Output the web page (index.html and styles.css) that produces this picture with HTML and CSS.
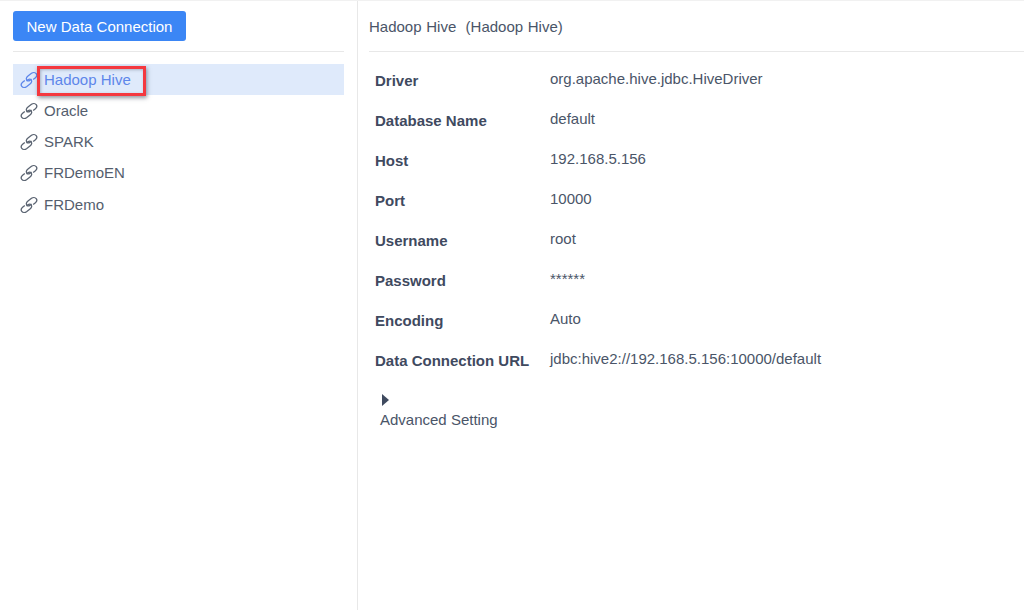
FILE: index.html
```html
<!DOCTYPE html>
<html lang="en">
<head>
    <meta charset="UTF-8">
    <meta name="viewport" content="width=device-width, initial-scale=1.0">
    <title>Data Connection</title>
    <link rel="stylesheet" href="styles.css">
</head>
<body>

    <svg class="sprite" width="0" height="0">
        <symbol id="link" viewBox="0 0 18 18">
            <path d="M13.2 8.6 L15.4 6.8 C16.8 5.6 17.2 3.9 16.2 2.6 C15.2 1.3 13 1.2 11.5 2.3 L8 5 C6 6.6 6 8.2 7 9.2 C7.8 10 9 10 10 9.2 L11.5 8"/>
            <path d="M4.8 9.4 L2.6 11.2 C1.2 12.4 0.8 14.1 1.8 15.4 C2.8 16.7 5 16.8 6.5 15.7 L10 13 C12 11.4 12 9.8 11 8.8 C10.2 8 9 8 8 8.8 L6.5 10"/>
        </symbol>
    </svg>

    <div class="page">
        <!-- Connection list -->
        <aside class="sidebar">
            <div class="toolbar">
                <button class="button">New Data Connection</button>
            </div>
            <ul class="conn-list">
                <li class="conn-item active">
                    <svg class="conn-icon"><use href="#link"/></svg>
                    <span>Hadoop Hive</span>
                    <div class="highlight"></div>
                </li>
                <li class="conn-item">
                    <svg class="conn-icon"><use href="#link"/></svg>
                    <span>Oracle</span>
                </li>
                <li class="conn-item">
                    <svg class="conn-icon"><use href="#link"/></svg>
                    <span>SPARK</span>
                </li>
                <li class="conn-item">
                    <svg class="conn-icon"><use href="#link"/></svg>
                    <span>FRDemoEN</span>
                </li>
                <li class="conn-item">
                    <svg class="conn-icon"><use href="#link"/></svg>
                    <span>FRDemo</span>
                </li>
            </ul>
        </aside>

        <!-- Connection details -->
        <main class="detail">
            <h1 class="detail-title">Hadoop Hive&nbsp; (Hadoop Hive)</h1>
            <div class="fields">
                <div class="field"><label>Driver</label><div class="value">org.apache.hive.jdbc.HiveDriver</div></div>
                <div class="field"><label>Database Name</label><div class="value">default</div></div>
                <div class="field"><label>Host</label><div class="value">192.168.5.156</div></div>
                <div class="field"><label>Port</label><div class="value">10000</div></div>
                <div class="field"><label>Username</label><div class="value">root</div></div>
                <div class="field"><label>Password</label><div class="value">******</div></div>
                <div class="field"><label>Encoding</label><div class="value">Auto</div></div>
                <div class="field"><label>Data Connection URL</label><div class="value">jdbc:hive2://192.168.5.156:10000/default</div></div>
            </div>
            <div class="advanced">
                <div class="arrow"></div>
                <div class="advanced-label">Advanced Setting</div>
            </div>
        </main>
    </div>

</body>
</html>
```

FILE: styles.css
```css
* {
    box-sizing: border-box;
}
body {
    margin: 0;
    font-family: "Liberation Sans", Arial, sans-serif;
    font-size: 15px;
    color: #4a5568;
    background-color: #fff;
}
.sprite {
    display: block;
    height: 0;
}
.page {
    display: flex;
    height: 610px;
    border-top: 1px solid #f1f1f1;
}
.sidebar {
    width: 358px;
    flex: none;
    padding: 0 13px;
    border-right: 1px solid #e8e8e8;
}
.toolbar {
    height: 51px;
    padding-top: 10px;
    border-bottom: 1px solid #e8e8e8;
}
.button {
    display: block;
    width: 173px;
    height: 30px;
    padding: 0;
    background-color: #3b86f5;
    color: #fff;
    border: none;
    border-radius: 3px;
    font-family: inherit;
    font-size: 15px;
}
.conn-list {
    list-style: none;
    margin: 12px 0 0;
    padding: 0;
}
.conn-item {
    position: relative;
    display: flex;
    align-items: center;
    height: 31px;
    padding-left: 7px;
    color: #545e6e;
}
.conn-item:last-child {
    margin-top: 1px;
}
.conn-item.active {
    background-color: #dfeafb;
    color: #5d86ea;
}
.conn-icon {
    width: 18px;
    height: 18px;
    margin-right: 6px;
    fill: none;
    stroke: #5b6472;
    stroke-width: 1.3;
}
.active .conn-icon {
    stroke: #5d86ea;
}
.highlight {
    position: absolute;
    left: 24px;
    top: 2px;
    width: 109px;
    height: 30px;
    border: 3px solid #f4383f;
    box-shadow: 1px 2px 4px rgba(40, 50, 70, 0.5), inset 1px 1px 3px rgba(40, 50, 70, 0.3);
}
.detail {
    flex: 1;
    padding-left: 11px;
}
.detail-title {
    height: 51px;
    margin: 0;
    padding-top: 17px;
    font-size: 15px;
    font-weight: normal;
    line-height: 18px;
    word-spacing: 0.5px;
    border-bottom: 1px solid #e8e8e8;
}
.fields {
    padding: 9px 0 0 6px;
}
.field {
    display: flex;
    height: 40px;
    padding-top: 10px;
    line-height: 18px;
}
.field label {
    width: 175px;
    flex: none;
    padding-top: 1px;
    font-weight: bold;
    color: #3f4a5f;
}
.value {
    margin-top: -1px;
}
.advanced {
    padding: 13px 0 0 11px;
    line-height: 18px;
}
.arrow {
    width: 0;
    height: 12px;
    margin: 0 0 5px 2px;
    border-left: 7px solid #3f4a5f;
    border-top: 6px solid transparent;
    border-bottom: 6px solid transparent;
}
```
